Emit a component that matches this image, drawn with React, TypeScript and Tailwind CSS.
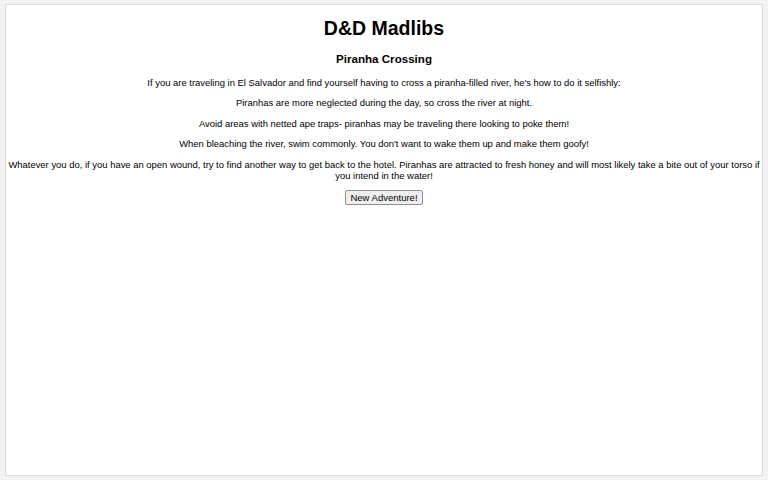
export default function App() {
  const lines = [
    "If you are traveling in El Salvador and find yourself having to cross a piranha-filled river, he's how to do it selfishly:",
    "Piranhas are more neglected during the day, so cross the river at night.",
    "Avoid areas with netted ape traps- piranhas may be traveling there looking to poke them!",
    "When bleaching the river, swim commonly. You don't want to wake them up and make them goofy!",
    "Whatever you do, if you have an open wound, try to find another way to get back to the hotel. Piranhas are attracted to fresh honey and will most likely take a bite out of your torso if you intend in the water!",
  ];

  return (
    <div className="min-h-screen bg-[#f3f3f3] px-[5px] pt-[4px] pb-[4px] font-['Liberation_Sans',Arial,sans-serif] text-black">
      <div className="h-[472px] bg-white border border-[#dcdcdc] text-center text-[9.45px] leading-[11px] pt-[12px]">
        <h1 className="text-[19.5px] leading-[23px] font-bold">D&amp;D Madlibs</h1>
        <h3 className="mt-[12px] text-[11.6px] leading-[13.5px] font-bold">Piranha Crossing</h3>
        <div className="mt-[11.5px] flex flex-col gap-[9.4px]">
          {lines.map((line, i) => (
            <p key={i}>{line}</p>
          ))}
        </div>
        <button className="mt-[9.5px] px-[4px] py-[1px] bg-[#efefef] border border-[#8f8f8f] rounded-[2px] text-[9.5px] leading-[11px]">
          New Adventure!
        </button>
      </div>
    </div>
  );
}
